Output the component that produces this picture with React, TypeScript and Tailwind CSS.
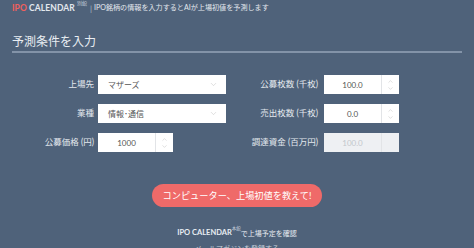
import { ChevronDown, ChevronUp } from "lucide-react";

const fontStack = { fontFamily: 'Lato, "Noto Sans CJK JP", sans-serif' };

const SelectBox = ({ value }: { value: string }) => (
  <div className="flex h-[19px] w-[128px] items-center justify-between bg-white pl-[10px] pr-[8px] text-[8px] text-[#555]">
    <span>{value}</span>
    <ChevronDown className="h-[9px] w-[9px] text-[#c8c8c8]" strokeWidth={1.5} />
  </div>
);

const NumberBox = ({ value, disabled = false }: { value: string; disabled?: boolean }) => (
  <div className={`flex h-[19px] w-[75px] items-stretch ${disabled ? "bg-[#eef0f3]" : "bg-white"}`}>
    <div className={`flex flex-1 items-center justify-center text-[8px] ${disabled ? "text-[#c3c7cc]" : "text-[#555]"}`}>
      {value}
    </div>
    <div className="flex w-[18px] flex-col items-center justify-center border-l border-[#e2e4e7]">
      {!disabled && (
        <>
          <ChevronUp className="h-[7px] w-[7px] text-[#b8b8b8]" strokeWidth={1.5} />
          <ChevronDown className="h-[7px] w-[7px] text-[#b8b8b8]" strokeWidth={1.5} />
        </>
      )}
    </div>
  </div>
);

const Label = ({ text, w }: { text: string; w: string }) => (
  <div className={`${w} text-right text-[8.5px] text-[#e4e9ef]`}>{text}</div>
);

export default function App() {
  return (
    <div className="h-[248px] w-[474px] overflow-hidden bg-[#4f627a]" style={fontStack}>
      {/* header */}
      <div className="flex h-[15px] items-center px-3 pt-[2px] text-[#e3e8ee]">
        <span className="text-[8.5px] font-bold tracking-[0.1px]">
          <span className="text-[#f0605d]">IPO</span> CALENDAR
        </span>
        <sup className="ml-[2px] -mt-[6px] text-[5px] text-[#c7d0da]">別館</sup>
        <span className="ml-[3px] text-[8px] text-[#aab6c4]">|</span>
        <span className="ml-[2px] text-[7.1px]">IPO銘柄の情報を入力するとAIが上場初値を予測します</span>
      </div>

      {/* title */}
      <div className="mt-[19px] px-3">
        <div className="text-[12px] leading-[16px] text-[#e8edf2]">予測条件を入力</div>
        <div className="mt-[1px] h-[2px] w-[450px] bg-[#8393a8]" />
      </div>

      {/* form */}
      <div className="mt-[22px] flex flex-col gap-[10px] pl-3">
        <div className="flex items-center">
          <Label text="上場先" w="w-[82px]" />
          <div className="ml-[4px]"><SelectBox value="マザーズ" /></div>
          <Label text="公募枚数 (千枚)" w="w-[92px]" />
          <div className="ml-[6px]"><NumberBox value="100.0" /></div>
        </div>
        <div className="flex items-center">
          <Label text="業種" w="w-[82px]" />
          <div className="ml-[4px]"><SelectBox value="情報･通信" /></div>
          <Label text="売出枚数 (千枚)" w="w-[92px]" />
          <div className="ml-[6px]"><NumberBox value="0.0" /></div>
        </div>
        <div className="flex items-center">
          <Label text="公募価格 (円)" w="w-[82px]" />
          <div className="ml-[4px] w-[128px]"><NumberBox value="1000" /></div>
          <Label text="調達資金 (百万円)" w="w-[92px]" />
          <div className="ml-[6px]"><NumberBox value="100.0" disabled /></div>
        </div>
      </div>

      {/* button */}
      <div className="mt-[32px] flex justify-center">
        <button className="flex h-[23px] w-[170px] items-center justify-center rounded-full bg-[#ef6a69] text-[9.2px] text-white">
          コンピューター、上場初値を教えて!
        </button>
      </div>

      {/* footer */}
      <div className="mt-[21px] flex items-center justify-center text-[7px] leading-[10px] text-[#e8edf2]">
        <span className="text-[7.5px] font-bold">IPO CALENDAR</span>
        <sup className="-mt-[4px] text-[4.5px] text-[#c7d0da]">本館</sup>
        <span>で上場予定を確認</span>
      </div>
      <div className="mt-[5px] flex justify-center text-[7px] leading-[10px] text-[#c9d2dc]">
        メールマガジンを登録する
      </div>
    </div>
  );
}
